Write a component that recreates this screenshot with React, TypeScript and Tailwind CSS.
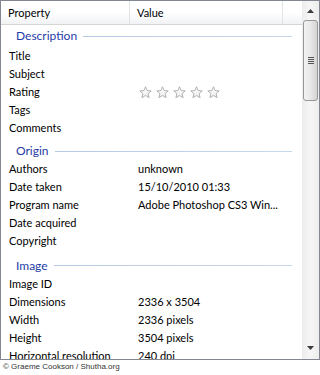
import React from 'react'

type Row = { label: string; value?: string; stars?: boolean }
type Group = { title: string; height: string; rows: Row[] }

const groups: Group[] = [
  {
    title: 'Description',
    height: 'h-[22px] pt-0',
    rows: [
      { label: 'Title' },
      { label: 'Subject' },
      { label: 'Rating', stars: true },
      { label: 'Tags' },
      { label: 'Comments' },
    ],
  },
  {
    title: 'Origin',
    height: 'h-[23px] pt-[5px]',
    rows: [
      { label: 'Authors', value: 'unknown' },
      { label: 'Date taken', value: '15/10/2010 01:33' },
      { label: 'Program name', value: 'Adobe Photoshop CS3 Win...' },
      { label: 'Date acquired' },
      { label: 'Copyright' },
    ],
  },
  {
    title: 'Image',
    height: 'h-[25px] pt-[6px]',
    rows: [
      { label: 'Image ID' },
      { label: 'Dimensions', value: '2336 x 3504' },
      { label: 'Width', value: '2336 pixels' },
      { label: 'Height', value: '3504 pixels' },
      { label: 'Horizontal resolution', value: '240 dpi' },
    ],
  },
]

function Star() {
  return (
    <svg width="13" height="13" viewBox="0 0 13 13">
      <defs>
        <linearGradient id="starFill" x1="0" y1="0" x2="0" y2="1">
          <stop offset="0" stopColor="#ffffff" />
          <stop offset="1" stopColor="#eeeeee" />
        </linearGradient>
      </defs>
      <path
        d="M6.5 0.8 L8.1 4.6 L12.2 4.9 L9.1 7.6 L10.1 11.7 L6.5 9.5 L2.9 11.7 L3.9 7.6 L0.8 4.9 L4.9 4.6 Z"
        fill="url(#starFill)"
        stroke="#a9a9a9"
        strokeWidth="0.9"
        strokeLinejoin="round"
      />
    </svg>
  )
}

function GroupHeader({ title, height }: { title: string; height: string }) {
  return (
    <div className={`flex items-center pl-[15px] pr-[10px] ${height}`}>
      <span className="text-[12px] leading-none text-[#1f3ca6]">{title}</span>
      <div className="ml-[6px] h-px flex-1 bg-gradient-to-r from-[#b8c9e4] to-[#c9d7ec]" />
    </div>
  )
}

function PropertyRow({ row }: { row: Row }) {
  return (
    <div className="flex h-[18px] items-center text-[11px] text-black">
      <div className="w-[130px] shrink-0 whitespace-nowrap pl-[8px]">{row.label}</div>
      <div className="flex flex-1 items-center whitespace-nowrap pl-[7px]">
        {row.stars ? (
          <div className="flex gap-[4px] pl-px">
            <Star />
            <Star />
            <Star />
            <Star />
            <Star />
          </div>
        ) : (
          row.value
        )}
      </div>
    </div>
  )
}

function ScrollBar() {
  return (
    <div className="flex w-[17px] shrink-0 flex-col bg-gradient-to-r from-[#ededed] via-[#f6f6f6] to-[#ededed]">
      <div className="flex h-[19px] items-center justify-center">
        <svg width="7" height="4" viewBox="0 0 7 4">
          <path d="M3.5 0 L7 4 L0 4 Z" fill="#3c3c3c" />
        </svg>
      </div>
      <div className="mx-[1px] flex h-[81px] items-center justify-center rounded-[3px] border border-[#979797] bg-gradient-to-r from-[#f3f3f3] via-[#e8e8e8] to-[#d4d4d4]">
        <div className="flex flex-col gap-px">
          <div className="h-px w-[6px] bg-[#555]" />
          <div className="h-px w-[6px] bg-[#555]" />
          <div className="h-px w-[6px] bg-[#555]" />
          <div className="h-px w-[6px] bg-[#555]" />
        </div>
      </div>
      <div className="flex-1" />
      <div className="flex h-[19px] items-center justify-center pb-[3px]">
        <svg width="7" height="4" viewBox="0 0 7 4">
          <path d="M0 0 L7 0 L3.5 4 Z" fill="#3c3c3c" />
        </svg>
      </div>
    </div>
  )
}

export default function App() {
  return (
    <div
      className="h-[375px] w-[320px] overflow-hidden bg-white"
      style={{ fontFamily: 'Lato, "Noto Sans", sans-serif' }}
    >
      <div className="flex h-[360px] w-[320px] border border-[#828790]">
        {/* List area */}
        <div className="flex min-w-0 flex-1 flex-col overflow-hidden">
          <div className="flex h-[24px] shrink-0 border-b border-[#d5d5d5] bg-gradient-to-b from-white via-white to-[#f1f2f4] text-[11px] text-black">
            <div className="flex w-[129px] items-center border-r border-[#e2e3e6] pl-[7px] pt-[2px]">Property</div>
            <div className="flex w-[153px] items-center border-r border-[#e2e3e6] pl-[7px] pt-[2px]">Value</div>
            <div className="flex-1" />
          </div>
          <div className="flex-1 overflow-hidden">
            {groups.map((g) => (
              <div key={g.title}>
                <GroupHeader title={g.title} height={g.height} />
                {g.rows.map((r) => (
                  <PropertyRow key={r.label} row={r} />
                ))}
              </div>
            ))}
          </div>
        </div>
        <ScrollBar />
      </div>
      <div
        className="pl-[3px] pt-[2px] text-[8px] leading-[10px] text-[#333]"
        style={{ fontFamily: '"Liberation Sans", Arial, sans-serif' }}
      >
        © Graeme Cookson / Shutha.org
      </div>
    </div>
  )
}
